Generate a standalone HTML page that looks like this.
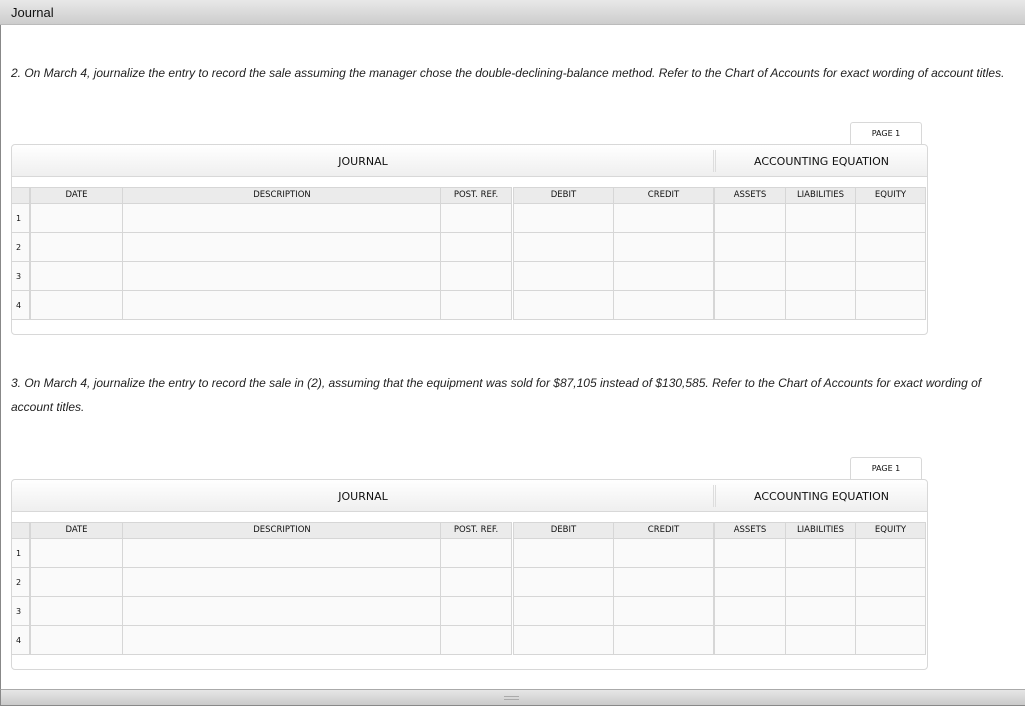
<!DOCTYPE html>
<html><head><style>
*{margin:0;padding:0;box-sizing:border-box}
body{width:1025px;height:706px;position:relative;overflow:hidden;background:#fff;font-family:"Liberation Sans",Arial,sans-serif;}
.top{position:absolute;left:0;top:0;width:1025px;height:25px;background:linear-gradient(#e8e8e8,#cdcdcd);border-bottom:1px solid #bbb}
.top span{position:absolute;left:11px;top:5px;font-size:13px;color:#111}
.lb{position:absolute;left:0;top:25px;width:1px;height:665px;background:#888}
.bot{position:absolute;left:0;top:689px;width:1025px;height:17px;background:linear-gradient(#e6e6e6,#cacaca);border-top:1px solid #aaa;border-left:1px solid #888;border-bottom:1px solid #888}
.grip{position:absolute;left:503px;top:6px;width:15px;height:4px;border-top:1px solid #aaa;border-bottom:1px solid #aaa}
.q{position:absolute;left:11px;font-size:12px;font-style:italic;color:#222;line-height:24px}
.tab{position:absolute;width:72px;height:24px;border:1px solid #d8d8d8;border-bottom:none;border-radius:3px 3px 0 0;background:#fff;font-family:"DejaVu Sans",sans-serif;font-size:8px;text-align:center;line-height:22px;color:#111}
.box{position:absolute;left:11px;width:917px;height:191px;border:1px solid #d8d8d8;border-radius:4px;background:#fff}
.hb{position:absolute;left:0;top:0;width:915px;height:32px;background:linear-gradient(#fff,#efefef);border-bottom:1px solid #d8d8d8;border-radius:4px 4px 0 0;font-family:"DejaVu Sans",sans-serif;font-size:11px;color:#111}
.hb .a{position:absolute;left:0;width:702px;text-align:center;top:10px}
.hb .b{position:absolute;left:704px;width:211px;text-align:center;top:10px}
.hb .s{position:absolute;left:701px;top:5px;width:3px;height:22px;border-left:1px solid #ddd;border-right:1px solid #ddd}
.c{position:absolute;border:1px solid #d6d6d6;background:#fafafa;font-family:"DejaVu Sans",sans-serif;font-size:8.5px;color:#111;text-align:center}
.h{background:#ebebeb;line-height:15px}
.n{text-align:left;padding-left:4px;line-height:30px;font-size:8px}
</style></head><body>
<div class="top"><span>Journal</span></div>
<div class="lb"></div>
<div class="q" style="top:61px">2. On March 4, journalize the entry to record the sale assuming the manager chose the double-declining-balance method. Refer to the Chart of Accounts for exact wording of account titles.</div>
<div class="q" style="top:371px;width:1000px">3. On March 4, journalize the entry to record the sale in (2), assuming that the equipment was sold for $87,105 instead of $130,585. Refer to the Chart of Accounts for exact wording of<br>account titles.</div>
<div id="t1"></div><div id="t2"></div>
<div class="bot"><div class="grip"></div></div>
<script>
function build(off){
 let h='';
 h+=`<div class="tab" style="left:850px;top:${122+off}px">PAGE 1</div>`;
 h+=`<div class="box" style="top:${144+off}px"><div class="hb"><div class="a">JOURNAL</div><div class="s"></div><div class="b">ACCOUNTING EQUATION</div></div></div>`;
 const cols=[[11,19,''],[30,93,'DATE'],[122,320,'DESCRIPTION'],[440,72,'POST. REF.'],[513,101,'DEBIT'],[613,101,'CREDIT'],[714,72,'ASSETS'],[785,71,'LIABILITIES'],[855,71,'EQUITY']];
 const rows=[[187,17],[203,30],[232,30],[261,30],[290,30]];
 rows.forEach((r,ri)=>{cols.forEach((c,ci)=>{
  let cls='c'+(ri==0?' h':'')+(ci==0&&ri>0?' n':'');
  let t=ri==0?c[2]:(ci==0?ri:'');
  h+=`<div class="${cls}" style="left:${c[0]}px;top:${r[0]+off}px;width:${c[1]}px;height:${r[1]}px">${t}</div>`;
 })});
 return h;
}
document.getElementById('t1').innerHTML=build(0);
document.getElementById('t2').innerHTML=build(335);
</script>
</body></html>
